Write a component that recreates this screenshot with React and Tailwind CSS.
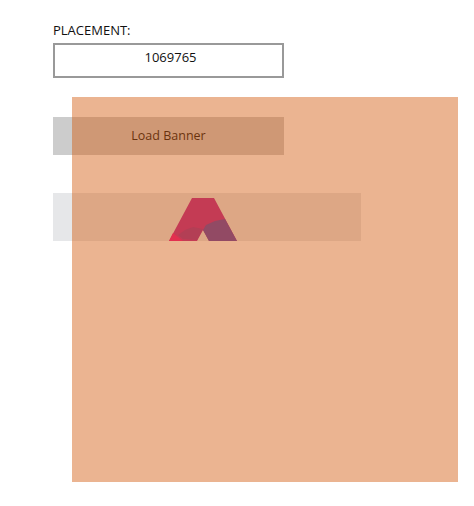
function Logo() {
  return (
    <svg width="70" height="44" viewBox="0 0 70 44" className="block">
      <polygon points="23,1 45,1 68,44 40,44 34,33 28,44 0,44" fill="#b82391" />
      <polygon points="56,22 68,44 40,44 34,33 37,28 46,24" fill="#5d3ead" />
      <polygon points="9,38 16,33 24,30 34,32 28,43 14,42" fill="#9a2a92" />
      <polygon points="0,44 4,36 14,44" fill="#ee1088" />
    </svg>
  );
}

export default function App() {
  return (
    <div className="relative h-[506px] w-[474px] overflow-hidden bg-white pl-[53px] pt-[21px] font-['Open_Sans',sans-serif] text-[#111111]">
      <div className="text-[13px] leading-[18px]">PLACEMENT:</div>
      <div className="mt-[4px] flex h-[35px] w-[231px] items-center justify-center border-2 border-[#999999] pb-[5px] text-[13px]">
        <span className="ml-[4px]">1069765</span>
      </div>
      <button className="mt-[39px] flex h-[38px] w-[231px] items-center justify-center bg-[#cccccc] text-[12.5px]">
        Load Banner
      </button>
      <div className="mt-[38px] flex h-[48px] w-[308px] items-end justify-center bg-[#e6e7e9]">
        <div className="mr-[6px]">
          <Logo />
        </div>
      </div>
      <div className="absolute left-[72px] top-[97px] h-[385px] w-[386px] bg-[#d2590a]/45" />
    </div>
  );
}
